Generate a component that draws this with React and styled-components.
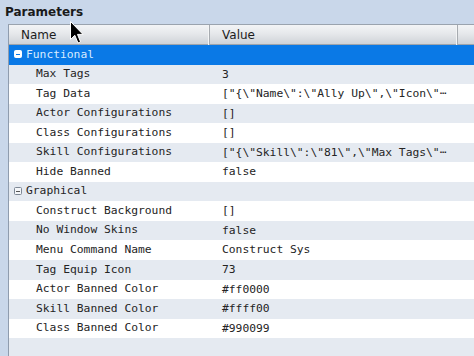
import React from "react";
import styled, { createGlobalStyle } from "styled-components";

const Global = createGlobalStyle`
  html, body { margin: 0; padding: 0; background: #c9d7ea; overflow: hidden; }
  body { width: 474px; height: 356px; font-family: "DejaVu Sans", sans-serif; }
`;

const Page = styled.div`
  position: relative;
  width: 474px;
  height: 356px;
  overflow: hidden;
  background: #c9d7ea;
`;

const Title = styled.div`
  height: 24px;
  padding: 4px 0 0 5px;
  box-sizing: border-box;
  font: bold 12px "DejaVu Sans", sans-serif;
  color: #1a1a1a;
  line-height: 16px;
`;

const Table = styled.div`
  margin-left: 8px;
  width: 480px;
  border-left: 1px solid #8f9cae;
  border-top: 1px solid #9aa3ae;
  background: #fff;
`;

const Header = styled.div`
  display: grid;
  grid-template-columns: 201px 248px 1fr;
  height: 20px;
  background: linear-gradient(#f3f4f6 0%, #e6e8eb 45%, #cfd3d8 100%);
  border-bottom: 1px solid #9ea4ab;
  box-sizing: border-box;
`;

const HeadCell = styled.div`
  padding-left: ${(p) => p.$pad}px;
  font: 12px "DejaVu Sans", sans-serif;
  color: #1c1c1c;
  line-height: 20px;
  border-right: ${(p) => (p.$last ? "none" : "1px solid #a7abb0")};
  box-shadow: ${(p) => (p.$last ? "none" : "inset -1px 0 0 #f4f5f6")};
`;

const Row = styled.div`
  display: grid;
  grid-template-columns: 201px 248px 1fr;
  height: 19.55px;
  background: ${(p) => (p.$selected ? "#0a79e6" : p.$alt ? "#e5eaf1" : "#ffffff")};
  color: ${(p) => (p.$selected ? "#d9ecff" : "#242424")};
  font: 11.3px "DejaVu Sans Mono", monospace;
  line-height: 20.5px;
  white-space: nowrap;
`;

const NameCell = styled.div`
  display: flex;
  align-items: center;
  padding-left: ${(p) => (p.$group ? 5 : 27)}px;
  gap: 4px;
  overflow: hidden;
`;

const ValueCell = styled.div`
  padding-left: 12px;
  overflow: hidden;
`;

const Toggle = styled.span`
  display: inline-flex;
  align-items: center;
  justify-content: center;
  width: 8px;
  height: 8px;
  box-sizing: border-box;
  border-radius: 1.5px;
  background: ${(p) => (p.$selected ? "#ffffff" : "#f4f6f9")};
  border: 1px solid ${(p) => (p.$selected ? "#ffffff" : "#7d8794")};
  margin-top: -1px;
  &::after {
    content: "";
    width: 4px;
    height: 1px;
    background: ${(p) => (p.$selected ? "#0a79e6" : "#555")};
  }
`;

const Cursor = styled.svg`
  position: absolute;
  left: 69px;
  top: 20px;
`;

const rows = [
  { group: true, name: "Functional", selected: true },
  { name: "Max Tags", value: "3" },
  { name: "Tag Data", value: '["{\\"Name\\":\\"Ally Up\\",\\"Icon\\"⋯' },
  { name: "Actor Configurations", value: "[]" },
  { name: "Class Configurations", value: "[]" },
  { name: "Skill Configurations", value: '["{\\"Skill\\":\\"81\\",\\"Max Tags\\"⋯' },
  { name: "Hide Banned", value: "false" },
  { group: true, name: "Graphical" },
  { name: "Construct Background", value: "[]" },
  { name: "No Window Skins", value: "false" },
  { name: "Menu Command Name", value: "Construct Sys" },
  { name: "Tag Equip Icon", value: "73" },
  { name: "Actor Banned Color", value: "#ff0000" },
  { name: "Skill Banned Color", value: "#ffff00" },
  { name: "Class Banned Color", value: "#990099" },
  { name: "", value: "" },
];

export default function App() {
  return (
    <Page>
      <Global />
      <Title>Parameters</Title>
      <Table>
        <Header>
          <HeadCell $pad={12}>Name</HeadCell>
          <HeadCell $pad={12}>Value</HeadCell>
          <HeadCell $last $pad={0} />
        </Header>
        {rows.map((r, i) => (
          <Row key={i} $alt={i % 2 === 1} $selected={r.selected}>
            <NameCell $group={r.group}>
              {r.group && <Toggle $selected={r.selected} />}
              {r.name}
            </NameCell>
            <ValueCell>{r.value}</ValueCell>
            <div />
          </Row>
        ))}
      </Table>
      <Cursor width="15" height="25" viewBox="0 0 15 25">
        <path
          d="M1.5 1.5 L1.5 19.5 L5.8 15.3 L9 23 L11.6 21.9 L8.5 14.4 L14 14.4 Z"
          fill="#000"
          stroke="#fff"
          strokeWidth="1"
          strokeLinejoin="round"
        />
      </Cursor>
    </Page>
  );
}
